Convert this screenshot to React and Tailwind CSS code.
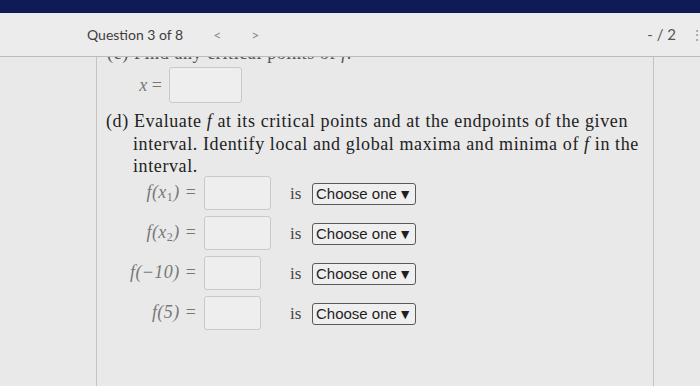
import React from 'react';

const serif = { fontFamily: '"Liberation Serif", "Times New Roman", serif' };

const rows = [
  { label: <>f(<i>x</i><sub className="text-[12px] not-italic">1</sub>) =</>, box: 'w-[67px]' },
  { label: <>f(<i>x</i><sub className="text-[12px] not-italic">2</sub>) =</>, box: 'w-[67px]' },
  { label: <>f(−10) =</>, box: 'w-[57px]' },
  { label: <>f(5) =</>, box: 'w-[57px]' },
];

const ChooseOne = () => (
  <div className="flex items-center h-[22px] w-[104px] border border-[#5a5a5a] rounded-[3px] bg-[#efefef] pl-[3px] pr-[3px] text-[15px] text-[#1e1e1e] font-['Liberation_Sans',Arial,sans-serif]">
    <span className="flex-1 whitespace-nowrap">Choose one</span>
    <span className="text-[14px] leading-none">▼</span>
  </div>
);

export default function App() {
  return (
    <div className="w-[700px] h-[386px] overflow-hidden bg-[#e9e9e9] flex flex-col">
      {/* top bar */}
      <div className="h-[13px] bg-[#0f1b57] shrink-0" />

      {/* header */}
      <div className="h-[44px] shrink-0 flex items-center border-b border-[#bcbcbc] bg-[#ececec] font-['Lato',sans-serif] text-[#3d3d3d]">
        <span className="ml-[87px] text-[14px]">Question 3 of 8</span>
        <span className="ml-[30px] text-[14px] text-[#8a8a8a]">&lt;</span>
        <span className="ml-[30px] text-[14px] text-[#8a8a8a]">&gt;</span>
        <span className="ml-auto text-[15px] text-[#555]">- / 2</span>
        <span className="ml-[14px] mr-[-4px] text-[14px] text-[#999]">⋮</span>
      </div>

      {/* body */}
      <div className="flex flex-1">
        <div className="w-[97px] border-r border-[#c4c4c4]" />

        <div className="flex-1 text-[#222]" style={serif}>
          {/* clipped previous line */}
          <div className="h-[10px] overflow-hidden pl-[10px]">
            <div className="-mt-[15px] text-[18px] tracking-[0.6px] leading-[22px] whitespace-nowrap text-[#555]">
              (c) Find any critical points of <i>f</i>.
            </div>
          </div>

          <div className="flex items-center">
            <span className="w-[65px] text-right text-[18px] text-[#777]"><i>x</i> =</span>
            <div className="ml-[7px] w-[73px] h-[36px] border border-[#c9c9c9] rounded-[3px] bg-[#eeeeee]" />
          </div>

          <p className="mt-[7px] pl-[36px] -indent-[27px] text-[18px] tracking-[0.6px] leading-[22.5px] whitespace-nowrap">
            (d) Evaluate <i>f</i> at its critical points and at the endpoints of the given<br />
            interval. Identify local and global maxima and minima of <i>f</i> in the<br />
            interval.
          </p>

          <div className="flex flex-col gap-[6px] -mt-[2px]">
            {rows.map((r, i) => (
              <div key={i} className="flex items-center">
                <span className="w-[100px] text-right text-[18px] tracking-[0.4px] italic text-[#777] whitespace-nowrap">{r.label}</span>
                <div className="w-[7px]" />
                <div className="w-[86px]">
                  <div className={`${r.box} h-[34px] border border-[#c9c9c9] rounded-[3px] bg-[#eeeeee]`} />
                </div>
                <span className="w-[22px] text-[17px] text-[#444] pt-[2px]">is</span>
                <div className="pt-[3px]">
                  <ChooseOne />
                </div>
              </div>
            ))}
          </div>
        </div>

        <div className="w-[47px] border-l border-[#c4c4c4]" />
      </div>
    </div>
  );
}
